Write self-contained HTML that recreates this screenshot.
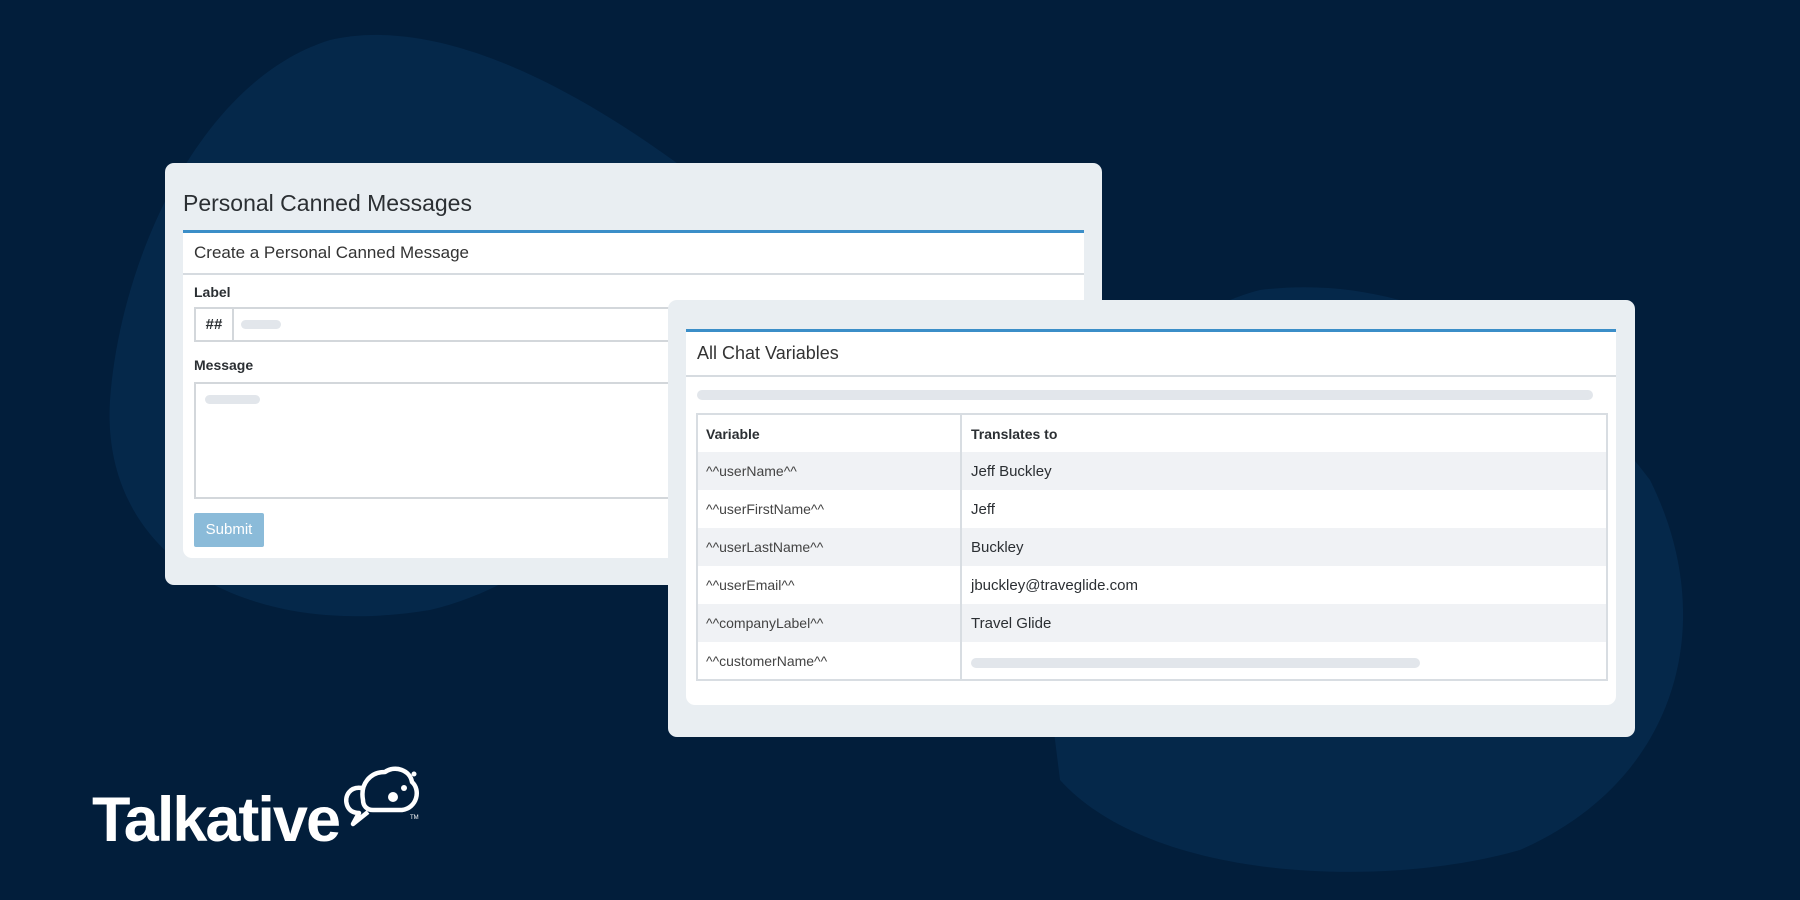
<!DOCTYPE html>
<html><head><meta charset="utf-8"><style>
*{box-sizing:border-box;margin:0;padding:0}
body{width:1800px;height:900px;background:#021e3b;position:relative;overflow:hidden;font-family:"Liberation Sans",sans-serif;color:#2b2f33}
.card{position:absolute;background:#e9eef2;border-radius:9px}
.panel{position:absolute;background:#fff;border-top:3px solid #3b8ec8;border-radius:0 0 9px 9px}
.hdr{height:42px;border-bottom:2px solid #d6dbe0;font-size:17px;padding-left:11px;line-height:40px;color:#333}
.sk{position:absolute;background:#e2e6eb;border-radius:6px}
table{position:absolute;border-collapse:collapse;border:2px solid #d8dde2;font-size:15px}
td{height:38px;padding:0 0 0 8px;vertical-align:middle}
td+td{border-left:2px solid #d8dde2;padding-left:9px}
tr:nth-child(even) td{background:#f0f2f5}
th{height:38px;text-align:left;padding-left:8px;font-size:14px;font-weight:bold}
th+th{border-left:2px solid #d8dde2;padding-left:9px}
.v{font-size:14px;color:#444}
</style></head><body>
<svg style="position:absolute;left:0;top:0" width="1800" height="900">
<path d="M110 400 C120 260 200 80 330 40 C460 10 620 120 700 180 C760 300 640 560 430 610 C250 640 100 560 110 400Z" fill="#05284a"/>
<path d="M1050 700 C1120 520 1100 330 1260 290 C1420 270 1560 360 1650 480 C1720 620 1680 780 1520 850 C1380 890 1150 880 1060 780Z" fill="#05284a"/>
</svg>
<div class="card" style="left:165px;top:163px;width:937px;height:422px">
<div style="position:absolute;left:18px;top:27px;font-size:23px;color:#2b2f33">Personal Canned Messages</div>
<div class="panel" style="left:18px;top:67px;width:901px;height:328px">
<div class="hdr">Create a Personal Canned Message</div>
<div style="position:absolute;left:11px;top:51px;font-size:14px;font-weight:bold">Label</div>
<div style="position:absolute;left:11px;top:74px;width:888px;height:35px;border:2px solid #d3d7db">
<div style="position:absolute;left:0;top:0;width:38px;height:31px;border-right:2px solid #d3d7db;font-size:15px;line-height:31px;text-align:center;font-weight:bold">##</div>
<div class="sk" style="left:45px;top:11px;width:40px;height:9px"></div></div>
<div style="position:absolute;left:11px;top:124px;font-size:14px;font-weight:bold">Message</div>
<div style="position:absolute;left:11px;top:149px;width:888px;height:117px;border:2px solid #d3d7db">
<div class="sk" style="left:9px;top:11px;width:55px;height:9px"></div></div>
<div style="position:absolute;left:11px;top:280px;width:70px;height:34px;background:#8bbbd9;border-radius:2px;color:#fff;font-size:15px;line-height:34px;text-align:center">Submit</div>
</div></div>
<div class="card" style="left:668px;top:300px;width:967px;height:437px">
<div class="panel" style="left:18px;top:29px;width:930px;height:376px">
<div class="hdr" style="height:45px;line-height:42px;font-size:18px">All Chat Variables</div>
<div class="sk" style="left:11px;top:58px;width:896px;height:10px"></div>
<table style="left:10px;top:81px;width:912px">
<tr style="background:#fff"><th style="width:264px">Variable</th><th>Translates to</th></tr>
<tr><td class="v">^^userName^^</td><td>Jeff Buckley</td></tr>
<tr><td class="v">^^userFirstName^^</td><td>Jeff</td></tr>
<tr><td class="v">^^userLastName^^</td><td>Buckley</td></tr>
<tr><td class="v">^^userEmail^^</td><td>jbuckley@traveglide.com</td></tr>
<tr><td class="v">^^companyLabel^^</td><td>Travel Glide</td></tr>
<tr><td class="v">^^customerName^^</td><td><div style="width:449px;height:10px;background:#e2e6eb;border-radius:5px;margin-top:4px"></div></td></tr>
</table>
</div></div>
<div style="position:absolute;left:92px;top:784px;font-size:63px;font-weight:bold;color:#fff;letter-spacing:-2px">Talkative</div>
<svg style="position:absolute;left:0;top:0" width="1800" height="900">
<g fill="none" stroke="#fff" stroke-width="4.5" stroke-linejoin="round">
<path d="M363 800 C360 784 370 772 385 772 C395 765 410 770 412 782 C421 790 417 808 402 810 L373 810 C367 810 363 806 363 800 Z"/>
<path d="M362 788 C350 786 344 796 347 805 C349 811 354 813 359 813 L353 824 L368 812"/>
</g>
<circle cx="393" cy="797" r="5" fill="#fff"/><circle cx="404" cy="788" r="3" fill="#fff"/><circle cx="414" cy="774" r="2.5" fill="#fff"/>
<text x="410" y="819" font-size="6" fill="#fff" font-family="Liberation Sans">TM</text>
</svg>
</body></html>
